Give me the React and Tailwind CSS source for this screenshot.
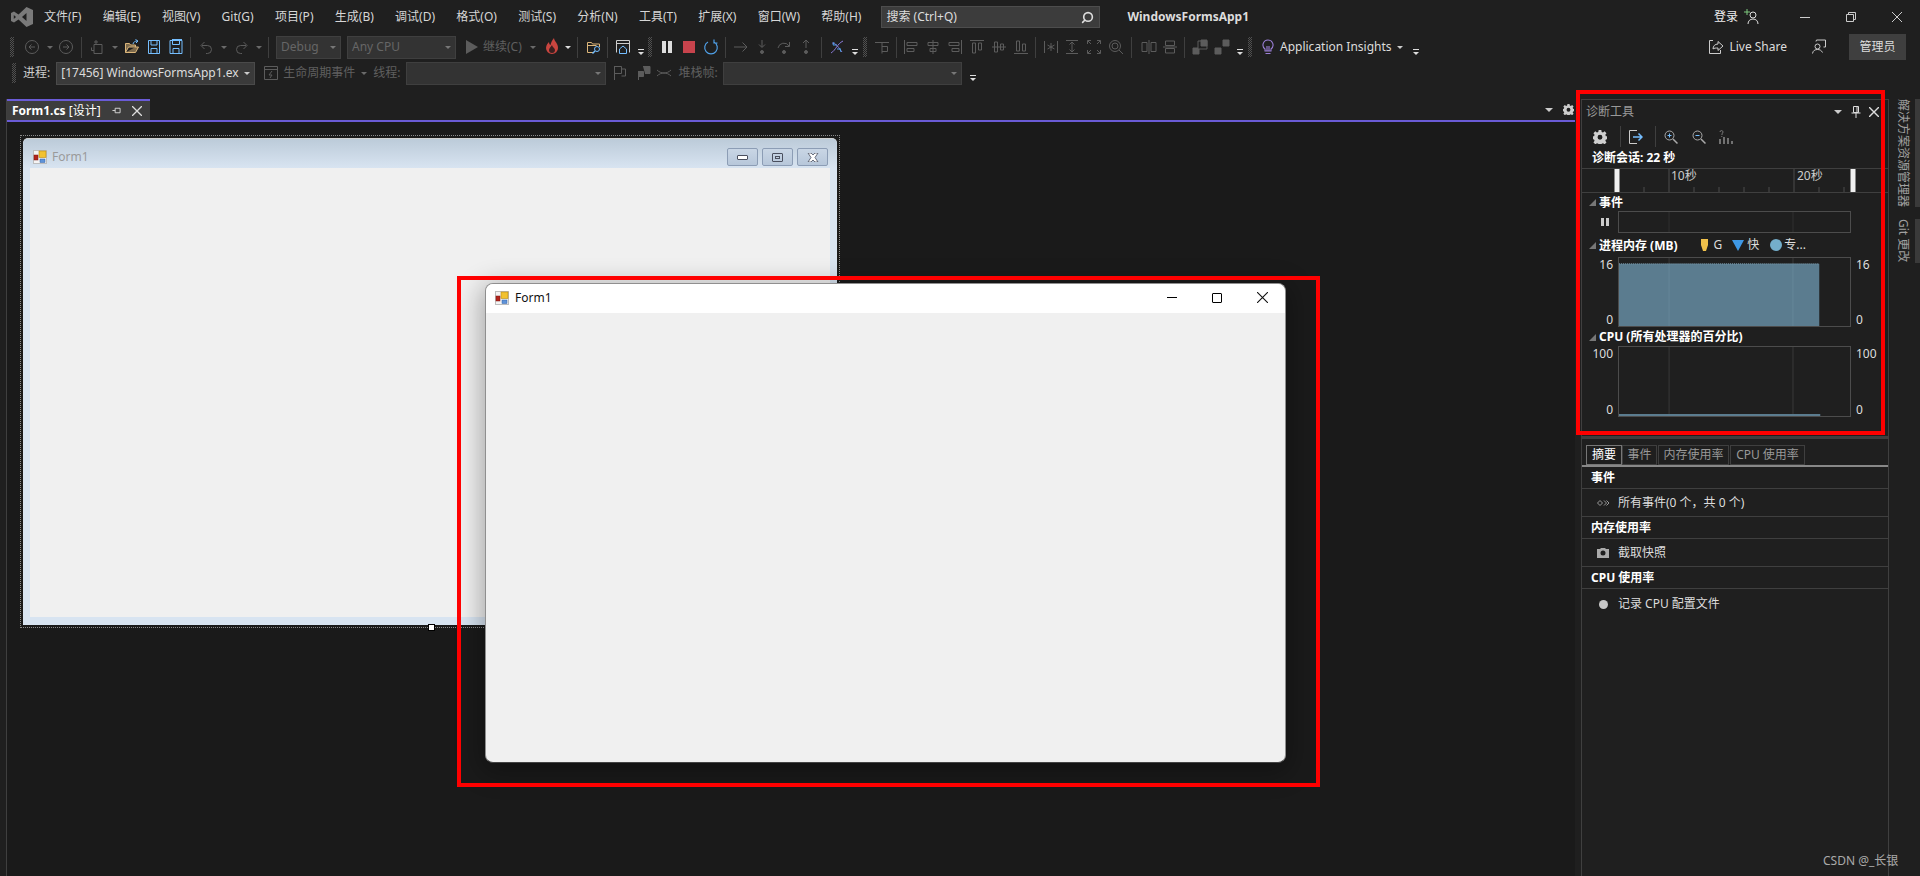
import { Search } from 'lucide-react'

const MENU = ['文件(F)', '编辑(E)', '视图(V)', 'Git(G)', '项目(P)', '生成(B)', '调试(D)', '格式(O)', '测试(S)', '分析(N)', '工具(T)', '扩展(X)', '窗口(W)', '帮助(H)']

function Ico({ className = '', children, fill = 'none' }) {
  return (
    <svg viewBox="0 0 16 16" fill={fill} stroke="currentColor" strokeWidth="1" className={`w-4 h-4 shrink-0 ${className}`}>
      {children}
    </svg>
  )
}

const Grip = ({ className = '' }) => (
  <div className={`w-[4px] h-[20px] shrink-0 bg-[conic-gradient(#505050_25%,transparent_0_50%,#505050_0_75%,transparent_0)] bg-[length:2px_2px] ${className}`} />
)
const Sep = ({ className = '' }) => <div className={`w-px h-[21px] shrink-0 bg-[#3f3f3f] ${className}`} />
const Caret = ({ className = '', color = 'border-t-[#6a6a6a]' }) => (
  <div className={`w-0 h-0 shrink-0 border-x-[3px] border-x-transparent border-t-[3px] ${color} ${className}`} />
)
const Overflow = ({ className = '' }) => (
  <div className={`w-[6px] shrink-0 flex flex-col items-center gap-[2px] mt-[9px] ${className}`}>
    <div className="w-[6px] h-px bg-[#ddd]" />
    <Caret color="border-t-[#ddd]" />
  </div>
)

function Combo({ className = '', text, textClass = 'text-[#666]', caret = 'border-t-[#777]', bg = 'bg-[#333] border-[#3f3f3f]' }) {
  return (
    <div className={`h-[23px] shrink-0 flex items-center border ${bg} ${className}`}>
      <span className={`flex-1 min-w-0 pl-[4px] whitespace-nowrap leading-[16px] ${textClass}`}>{text}</span>
      <Caret color={caret} className="mx-[4px]" />
    </div>
  )
}

function VsLogo() {
  return (
    <svg viewBox="0 0 22 20" className="w-[22px] h-[20px] shrink-0 ml-[11px]" fill="#7a7a7a" fillRule="evenodd">
      <path d="M15.5 0 22 3v14l-6.500 3-8-7.500L3 15.500 0 14V6l3-1.500 4.500 3zM15.500 6 11 10l4.500 4zM2.800 8v4L5 10z" />
    </svg>
  )
}

function FormIcon({ className = '' }) {
  return (
    <svg viewBox="0 0 14 14" className={`w-[14px] h-[14px] shrink-0 ${className}`}>
      <rect x="0.5" y="0.500" width="13" height="13" fill="#f4f4f4" stroke="#bdbdbd" />
      <rect x="6" y="1" width="7" height="6.500" fill="#f2c230" stroke="#b88a12" strokeWidth="0.6" />
      <rect x="1" y="5" width="4" height="5" fill="#b3241c" stroke="#7c1610" strokeWidth="0.5" />
      <rect x="7" y="9" width="5" height="3.500" fill="#5f93d8" stroke="#2f5fa8" strokeWidth="0.5" />
    </svg>
  )
}

function TitleBar() {
  return (
    <div className="h-[34px] flex items-center">
      <VsLogo />
      <div className="flex items-center gap-[21.3px] ml-[11px] text-[#d6d6d6]">
        {MENU.map((m) => (
          <span key={m} className="whitespace-nowrap">{m}</span>
        ))}
      </div>
      <div className="ml-[20px] w-[219px] h-[22px] flex items-center justify-between bg-[#3c3c3c] border border-[#4d4d4d] pl-[4px] pr-[5px] text-[#dcdcdc]">
        <span>搜索 (Ctrl+Q)</span>
        <Search size={13} strokeWidth={3} className="-scale-x-100 text-[#ddd]" />
      </div>
      <span className="ml-[27px] font-bold text-[#dcdcdc]">WindowsFormsApp1</span>
      <div className="ml-auto flex items-center text-[#eee]">
        <span>登录</span>
        <svg viewBox="0 0 16 18" className="w-[16px] h-[18px] ml-[6px]" fill="none" stroke="#ddd">
          <circle cx="9" cy="7" r="3" />
          <path d="M4 16c0-3 2-5 5-5s5 2 5 5" />
          <path d="M3 1v6M0 4h6" stroke="#7fc97f" />
        </svg>
        <div className="w-[10px] h-px bg-[#ccc] ml-[40px]" />
        <svg viewBox="0 0 10 10" className="w-[10px] h-[10px] ml-[36px]" fill="none" stroke="#ccc">
          <path d="M0.500 2.500h7v7h-7zM2.500 2.500v-2h7v7h-2" />
        </svg>
        <svg viewBox="0 0 10 10" className="w-[10px] h-[10px] ml-[36px] mr-[18px]" fill="none" stroke="#ccc">
          <path d="M0 0l10 10M10 0L0 10" />
        </svg>
      </div>
    </div>
  )
}

function Toolbar1() {
  const off = 'text-[#5c5c5c]'
  return (
    <div className="h-[26px] flex items-center">
      <Grip className="ml-[10px]" />
      <Ico className={`ml-[10px] ${off}`}><circle cx="8" cy="8" r="6.500" /><path d="M11 8H5M7.500 5.500 5 8l2.500 2.500" /></Ico>
      <Caret className="ml-[7px]" />
      <Ico className={`ml-[5px] ${off}`}><circle cx="8" cy="8" r="6.500" /><path d="M5 8h6M8.500 5.500 11 8l-2.500 2.500" /></Ico>
      <Sep className="ml-[7px]" />
      <Ico className={`ml-[7px] ${off}`}><path d="M5 5.500h8v9H5zM2.500 8.500v3h2.500M7 1v4M5 3h4" /></Ico>
      <Caret className="ml-[7px]" />
      <Ico className="ml-[6px] text-[#dcb67a]"><path d="M1.500 13.500v-9h4l1 1.500h5v2M1.500 13.500h10l3-5.500h-10z" fill="#dcb67a" fillOpacity="0.5" /><path d="M9 5c.5-2 2-3 4-3M11.500.5 14 2l-2 2" stroke="#75beff" /></Ico>
      <Ico className="ml-[6px] text-[#75beff]"><path d="M2.500 1.500h11v13h-11zM5 1.500v4.500h6V1.500M5 14.500v-5h6v5" /></Ico>
      <Ico className="ml-[6px] text-[#75beff]"><path d="M2 14.500v-13h12v13zM4.500 1.500v4h7v-4M5 14.500v-5h6v5" /><path d="M4 .5h10" /></Ico>
      <Sep className="ml-[6px]" />
      <Ico className={`ml-[7px] ${off}`}><path d="M4 6.500h5.500a4 4 0 0 1 0 8H8M6.500 3 3 6.500 6.500 10" /></Ico>
      <Caret className="ml-[7px]" />
      <Ico className={`ml-[7px] ${off}`}><path d="M12 6.500H6.500a4 4 0 0 0 0 8H8M9.500 3 13 6.500 9.500 10" /></Ico>
      <Caret className="ml-[6px]" />
      <Sep className="ml-[6px]" />
      <Combo className="ml-[7px] w-[65px]" text="Debug" />
      <Combo className="ml-[6px] w-[109px]" text="Any CPU" />
      <svg viewBox="0 0 12 14" className="w-[12px] h-[14px] ml-[10px] shrink-0" fill="#5c5c5c"><path d="M0 0l12 7-12 7z" /></svg>
      <span className="ml-[5px] w-[39px] whitespace-nowrap text-[#5f5f5f]">继续(C)</span>
      <Caret className="ml-[8px]" />
      <svg viewBox="0 0 16 18" className="w-[16px] h-[18px] ml-[8px] shrink-0">
        <path d="M10 0c0 3 4 5 4 10a6 6 0 0 1-12 0c0-3 2-5 3-6 0 2 1 3 1.500 3C7 5 8 2 10 0z" fill="#c9453f" />
        <path d="M8 7c0 2 3 3 3 5a3 3 0 0 1-6 0c0-2 2-3 3-5z" fill="#3a2020" />
      </svg>
      <Caret className="ml-[5px]" color="border-t-[#ddd]" />
      <Sep className="ml-[6px]" />
      <Ico className="ml-[8px] text-[#dcb67a]"><path d="M1.500 13.500v-10h4l1 1.500h7v3" /><path d="M1.500 13.500h6" /><path d="M1.500 6.500h9" /><circle cx="11" cy="10" r="2.500" stroke="#75beff" /><path d="M9 12l-2.500 2.500" stroke="#75beff" strokeWidth="1.500" /></Ico>
      <Sep className="ml-[5px]" />
      <Ico className="ml-[7px] text-[#ccc]"><path d="M1.500 13.500v-12h13v12M1.500 4.500h13" /><path d="M8 7l-3.500 3v4.500h7V10z" fill="#1f1f1f" stroke="#75beff" /></Ico>
      <Overflow className="ml-[7px]" />
      <Grip className="ml-[4px]" />
      <svg viewBox="0 0 16 16" className="w-4 h-4 ml-[7px] shrink-0" fill="#ddd"><path d="M3 2h4v12H3zM9 2h4v12H9z" /></svg>
      <svg viewBox="0 0 16 16" className="w-4 h-4 ml-[6px] shrink-0" fill="#c7434c"><path d="M2 2h12v12H2z" /></svg>
      <Ico className="ml-[6px] text-[#4f9fe6]"><path d="M5 3a6.300 6.300 0 1 0 6 0M11 .5V4h3.500" strokeWidth="1.200" /></Ico>
      <Sep className="ml-[6px]" />
      <Ico className={`ml-[7px] ${off}`}><path d="M1 8h13M9.500 3.500 14 8l-4.500 4.500" /></Ico>
      <Ico className={`ml-[5px] ${off}`}><path d="M8 1v7M5 5.500 8 8.500l3-3" /><circle cx="8" cy="13" r="1.500" fill="currentColor" /></Ico>
      <Ico className={`ml-[6px] ${off}`}><path d="M2 9a6 6 0 0 1 11-2M13.500 3v4.500H9" /><circle cx="8" cy="13" r="1.500" fill="currentColor" /></Ico>
      <Ico className={`ml-[6px] ${off}`}><path d="M8 9V1M5 4l3-3 3 3" /><circle cx="8" cy="13" r="1.500" fill="currentColor" /></Ico>
      <Sep className="ml-[7px]" />
      <Ico className="ml-[7px] text-[#8a7bd8]"><path d="M2 14C7 11 8 5 14 2M3 4c4 0 7 5 10 9" /><path d="M5 3l-1 3M8 6H4M12 10H8M12 13l-1-3" stroke="#4f9fe6" /></Ico>
      <Overflow className="ml-[7px]" />
      <Grip className="ml-[5px]" />
      <Ico className={`ml-[7px] ${off}`}><path d="M1 3.500h14M8 3.500v11M8 7.500h5.500v5H8" /></Ico>
      <Sep className="ml-[6px]" />
      <Ico className={`ml-[6px] ${off}`}><path d="M1.500 1v14M4 3.500h10v3H4zM4 9.500h7v3H4z" /></Ico>
      <Ico className={`ml-[6px] ${off}`}><path d="M8 1v14M3 3.500h10v3H3zM5 9.500h6v3H5z" /></Ico>
      <Ico className={`ml-[6px] ${off}`}><path d="M14.500 1v14M2 3.500h10v3H2zM5 9.500h7v3H5z" /></Ico>
      <Ico className={`ml-[6px] ${off}`}><path d="M1 1.500h14M3.500 4v10h3V4zM9.500 4v7h3V4z" /></Ico>
      <Ico className={`ml-[6px] ${off}`}><path d="M1 8h14M3.500 3v10h3V3zM9.500 5v6h3V5z" /></Ico>
      <Ico className={`ml-[6px] ${off}`}><path d="M1 14.500h14M3.500 2v10h3V2zM9.500 5v7h3V5z" /></Ico>
      <Sep className="ml-[6px]" />
      <Ico className={`ml-[7px] ${off}`}><path d="M1.500 2v12M14.500 2v12M8 4v8M4.500 6l7 4M11.500 6l-7 4" /></Ico>
      <Ico className={`ml-[5px] ${off}`}><path d="M2 1.500h12M2 14.500h12M8 3v10M5.500 5.500 8 3l2.500 2.500M5.500 10.500 8 13l2.500-2.500" /></Ico>
      <Ico className={`ml-[6px] ${off}`}><path d="M1.500 5V1.500H5M11 1.500h3.500V5M14.500 11v3.500H11M5 14.500H1.500V11M2 2l3 3M14 2l-3 3M14 14l-3-3M2 14l3-3" /></Ico>
      <Ico className={`ml-[6px] ${off}`}><circle cx="7" cy="7" r="5.500" /><circle cx="7" cy="7" r="3" /><path d="M11 11l4 4" /></Ico>
      <Sep className="ml-[7px]" />
      <Ico className={`ml-[9px] ${off}`}><path d="M1 3.500h5v9H1zM10 3.500h5v9h-5zM8 1v14" /></Ico>
      <Ico className={`ml-[5px] ${off}`}><path d="M3.500 2h9v4.500h-9zM3.500 9.500h9V14h-9zM1 8h14" /></Ico>
      <Sep className="ml-[6px]" />
      <Ico className={`ml-[7px] ${off}`}><path d="M1 9h6v6H1z" fill="currentColor" /><path d="M6 2h9v8H6z" fill="#1f1f1f" /><path d="M9 1h6v6H9z" fill="currentColor" /></Ico>
      <Ico className={`ml-[6px] ${off}`}><path d="M1 9h6v6H1zM9 1h6v6H9z" fill="currentColor" /></Ico>
      <Overflow className="ml-[7px]" />
      <Grip className="ml-[5px]" />
      <Ico className="ml-[8px] text-[#9b7fd6]"><path d="M8 1a5 5 0 0 0-3 9v2h6v-2a5 5 0 0 0-3-9zM5.500 14.500h5M7 12V7M9 12V7" strokeWidth="1.100" /></Ico>
      <span className="ml-[4px] whitespace-nowrap text-[#dcdcdc]">Application Insights</span>
      <Caret className="ml-[5px]" color="border-t-[#ccc]" />
      <Overflow className="ml-[10px]" />
      <div className="ml-auto flex items-center">
        <svg viewBox="0 0 16 16" className="w-4 h-4 shrink-0" fill="none" stroke="#ccc">
          <path d="M5 1.500H1.500v13h11V11" />
          <path d="M5 10c0-3 2-5 5-5V2.500L15 7l-5 4.500V9c-2 0-4 0-5 1z" />
        </svg>
        <span className="ml-[5px] whitespace-nowrap text-[#dcdcdc]">Live Share</span>
        <svg viewBox="0 0 16 16" className="w-4 h-4 ml-[24px] shrink-0" fill="none" stroke="#ccc">
          <circle cx="6.500" cy="7.500" r="2.500" />
          <path d="M1.500 14.500c.5-3 2.500-4 5-4s4 1 5 3M5 2.500 5.500 1h9v7h-2" />
        </svg>
        <div className="ml-[22px] mr-[14px] w-[57px] h-[26px] flex items-center justify-center bg-[#3f3f3f] text-[#ddd]">管理员</div>
      </div>
    </div>
  )
}

function Toolbar2() {
  const off = 'text-[#5c5c5c]'
  return (
    <div className="h-[26px] flex items-center">
      <Grip className="ml-[12px]" />
      <span className="ml-[7px] whitespace-nowrap text-[#ccc]">进程:</span>
      <Combo className="ml-[6px] w-[199px]" text="[17456] WindowsFormsApp1.ex" textClass="text-[#ddd]" caret="border-t-[#ccc]" bg="bg-[#3a3a3a] border-[#4a4a4a]" />
      <Ico className={`ml-[8px] ${off}`}><path d="M1.500 1.500h13v13h-13zM1.500 4.500h13M9 6 6 10h3l-2 3" /></Ico>
      <span className="ml-[4px] whitespace-nowrap text-[#5f5f5f]">生命周期事件</span>
      <Caret className="ml-[6px]" />
      <span className="ml-[6px] whitespace-nowrap text-[#5f5f5f]">线程:</span>
      <Combo className="ml-[6px] w-[200px]" text="" />
      <Ico className={`ml-[6px] ${off}`}><path d="M2.500 1v14M2.500 1.500h7v7h-7M9.500 4h4v7h-4" /></Ico>
      <Ico className={`ml-[8px] ${off}`}><path d="M2.500 6v9M2.500 6.500h5v5h-5M7 1.500h7v7H9" fill="currentColor" /></Ico>
      <Ico className={`ml-[4px] ${off}`}><path d="M1 5c4 4 10 4 14 0M1 11c4-4 10-4 14 0" /></Ico>
      <span className="ml-[6px] whitespace-nowrap text-[#5f5f5f]">堆栈帧:</span>
      <Combo className="ml-[5px] w-[239px]" text="" />
      <Overflow className="ml-[8px]" />
    </div>
  )
}

function DesignerForm() {
  const btn = 'w-[31px] h-[18px] rounded-[2px] border border-[#8c9db5] bg-gradient-to-b from-[#c9d6e5] to-[#b7c7da] flex items-center justify-center'
  return (
    <div className="relative w-[820px] h-[493px] border border-dotted border-[#8a8a8a] p-[2px]">
      <div className="h-full flex flex-col rounded-t-[5px] border-t border-[#d0d0d0] bg-[#d8e4f1] px-[7px] pb-[8px]">
        <div className="h-[29px] -mx-[7px] pl-[10px] pr-[9px] pt-[7px] shrink-0 flex items-center rounded-t-[5px] bg-gradient-to-b from-[#bccbd9] to-[#d8e4f1]">
          <FormIcon />
          <span className="ml-[5px] text-[#9a9a9a]">Form1</span>
          <div className="ml-auto flex items-center gap-[4px]">
            <div className={btn}><div className="w-[11px] h-[5px] rounded-[1px] border border-[#4a4f5e] bg-white" /></div>
            <div className={btn}><div className="w-[11px] h-[9px] rounded-[1px] border border-[#4a4f5e] flex items-center justify-center"><div className="w-[5px] h-[3px] border border-[#4a4f5e]" /></div></div>
            <div className={btn}>
              <svg viewBox="0 0 12 9" className="w-[12px] h-[9px]" fill="#fff" stroke="#4a4f5e" strokeWidth="0.8"><path d="M1 0h3l2 2 2-2h3L8 4.500 11 9H8L6 7 4 9H1l3-4.500z" /></svg>
            </div>
          </div>
        </div>
        <div className="flex-1 bg-[#f0f0f0]" />
      </div>
      <div className="absolute left-[407px] -bottom-[4px] w-[7px] h-[7px] bg-white border border-black" />
    </div>
  )
}

function RunningForm() {
  return (
    <div className="absolute left-[485px] top-[283px] w-[801px] h-[480px] flex flex-col overflow-hidden rounded-[8px] border border-[#8f8f8f] border-b-[#444] shadow-[0_6px_26px_4px_rgba(0,0,0,0.3)] bg-[#f0f0f0]">
      <div className="h-[29px] shrink-0 flex items-center bg-white pl-[9px] pb-[2px] text-[#111]">
        <FormIcon />
        <span className="ml-[6px]">Form1</span>
        <div className="w-[10px] h-px bg-black ml-auto" />
        <div className="w-[10px] h-[10px] rounded-[1px] border border-black ml-[35px]" />
        <svg viewBox="0 0 10 10" className="w-[11px] h-[11px] ml-[35px] mr-[17px]" fill="none" stroke="#111">
          <path d="M0 0l10 10M10 0L0 10" />
        </svg>
      </div>
      <div className="flex-1" />
    </div>
  )
}

function EditorArea() {
  return (
    <div className="w-[1569px] shrink-0 flex flex-col border-l border-[#3f3f3f]">
      <div className="h-[21px] shrink-0 flex items-center justify-between">
        <div className="w-[143px] h-full flex items-center border-t-2 border-[#6a5bd6] bg-[#3d3d3d] pl-[5px] font-bold text-white">
          <span className="whitespace-nowrap">Form1.cs <span className="font-normal">[设计]</span></span>
          <svg viewBox="0 0 10 10" className="w-[9px] h-[9px] ml-[11px]" fill="none" stroke="#ddd"><path d="M.5 5h3M3.500 2.500v5M3.500 2.500h5.500v5H3.500" /></svg>
          <svg viewBox="0 0 10 10" className="w-[10px] h-[10px] ml-[11px]" fill="none" stroke="#ddd" strokeWidth="1.300"><path d="M0 0l10 10M10 0L0 10" /></svg>
        </div>
        <div className="flex items-center pr-[1px]">
          <Caret color="border-t-[#ccc]" className="border-x-[4px] border-t-[4px] mr-[10px]" />
          <svg viewBox="0 0 16 16" className="w-[11px] h-[11px]" fill="#ccc"><path d="M6.500 0h3l.4 2.200 1.500.6L13.300 1.500l2.100 2.100-1.300 1.900.6 1.500 2.300.4v3l-2.300.4-.6 1.500 1.300 1.900-2.100 2.100-1.900-1.300-1.500.6-.4 2.300h-3l-.4-2.300-1.500-.6-1.900 1.300L.5 14.200l1.300-1.900-.6-1.500L-1 10.400v-3l2.200-.4.6-1.500L.5 3.600 2.600 1.500l1.900 1.300 1.500-.6zM8 5.500a2.800 2.800 0 1 0 0 5.600 2.800 2.800 0 0 0 0-5.600z" fillRule="evenodd" /></svg>
        </div>
      </div>
      <div className="h-[2px] shrink-0 bg-[#6a5bd6]" />
      <div className="flex-1 bg-[#1a1a1a] pl-[13px] pt-[13px]">
        <DesignerForm />
      </div>
    </div>
  )
}

function SectionHead({ children, className = '' }) {
  return (
    <div className={`flex items-center pl-[7px] pt-[1px] font-bold text-white whitespace-nowrap ${className}`}>
      <div className="w-0 h-0 border-l-[7px] border-l-transparent border-b-[7px] border-b-[#777] mr-[3px]" />
      {children}
    </div>
  )
}

function ChartGrid({ fill }) {
  return (
    <svg viewBox="0 0 233 70" preserveAspectRatio="none" className="w-[233px] shrink-0 h-full border border-[#4c4c4c]">
      <path d="M50.500 0v70M175.500 0v70" stroke="#3a3a3a" />
      {fill === 'mem' && <rect x="0" y="6" width="202" height="64" fill="#5b7c8f" />}
      {fill === 'mem' && <path d="M0 6h202" stroke="#7f9fb0" strokeDasharray="1 1" />}
      {fill === 'mem' && <path d="M50.500 6v64M175.500 6v64" stroke="#668799" />}
      {fill === 'cpu' && <path d="M0 69h203" stroke="#5b7c8f" strokeWidth="2" />}
    </svg>
  )
}

function ChartRow({ top, bottom, fill, className = '' }) {
  return (
    <div className={`flex ${className}`}>
      <div className="w-[36px] pr-[5px] pt-[1px] shrink-0 flex flex-col justify-between items-end text-[#ddd] leading-[14px]">
        <span>{top}</span>
        <span>{bottom}</span>
      </div>
      <ChartGrid fill={fill} />
      <div className="w-[36px] pl-[5px] pt-[1px] shrink-0 flex flex-col justify-between text-[#ddd] leading-[14px]">
        <span>{top}</span>
        <span>{bottom}</span>
      </div>
    </div>
  )
}

function Ruler() {
  return (
    <div className="relative h-[25px] shrink-0 border-y border-[#3f3f3f] text-[#ccc]">
      <svg viewBox="0 0 305 23" className="absolute inset-0 w-full h-full">
        <path d="M86.500 0v23M211.500 0v23" stroke="#4c4c4c" />
        <path d="M61.500 18v5M111.500 18v5M136.500 18v5M161.500 18v5M186.500 18v5M236.500 18v5M261.500 18v5" stroke="#4c4c4c" />
        <path d="M32 0h5v23h-5zM268 0h5v23h-5z" fill="#f0f0f0" />
      </svg>
      <span className="absolute left-[89px] top-0 leading-[14px]">10秒</span>
      <span className="absolute left-[215px] top-0 leading-[14px]">20秒</span>
    </div>
  )
}

function DiagTools() {
  return (
    <div className="h-[336px] shrink-0 flex flex-col">
      <div className="h-[23px] shrink-0 flex items-center pl-[4px] pr-[9px] text-[#999]">
        <span>诊断工具</span>
        <Caret color="border-t-[#ccc]" className="ml-auto border-x-[4px] border-t-[4px]" />
        <svg viewBox="0 0 10 12" className="w-[10px] h-[12px] ml-[9px]" fill="none" stroke="#ddd"><path d="M2.500.5h5v6h-5zM.5 7h9M5 7v5M6 1v5" /></svg>
        <svg viewBox="0 0 10 10" className="w-[10px] h-[10px] ml-[8px]" fill="none" stroke="#ddd" strokeWidth="1.400"><path d="M0 0l10 10M10 0L0 10" /></svg>
      </div>
      <div className="h-[27px] shrink-0 flex items-center pl-[11px]">
        <svg viewBox="0 0 16 16" className="w-[14px] h-[14px] shrink-0" fill="#cfcfcf"><path d="M6.500 0h3l.4 2.200 1.500.6L13.300 1.500l2.100 2.100-1.300 1.900.6 1.500 2.300.4v3l-2.300.4-.6 1.500 1.300 1.900-2.100 2.100-1.900-1.300-1.500.6-.4 2.300h-3l-.4-2.300-1.500-.6-1.900 1.300L.5 14.200l1.300-1.900-.6-1.500L-1 10.400v-3l2.200-.4.6-1.500L.5 3.600 2.600 1.500l1.900 1.300 1.500-.6zM8 5.500a2.800 2.800 0 1 0 0 5.600 2.800 2.800 0 0 0 0-5.600z" fillRule="evenodd" /></svg>
        <Sep className="ml-[13px] h-[16px]" />
        <svg viewBox="0 0 14 14" className="w-[14px] h-[14px] ml-[8px] shrink-0" fill="none"><path d="M8 .5H.5v13H8" stroke="#ccc" /><path d="M4 7h9M9.500 3.500 13 7l-3.500 3.500" stroke="#75beff" strokeWidth="1.500" /></svg>
        <Sep className="ml-[12px] h-[16px]" />
        <Ico className="ml-[7px] text-[#aaa]"><circle cx="6.500" cy="6.500" r="4.500" /><path d="M10 10l4.500 4.500" strokeWidth="1.500" /><path d="M4.500 6.500h4M6.500 4.500v4" stroke="#75beff" /></Ico>
        <Ico className="ml-[12px] text-[#aaa]"><circle cx="6.500" cy="6.500" r="4.500" /><path d="M10 10l4.500 4.500" strokeWidth="1.500" /><path d="M4.500 6.500h4" stroke="#75beff" /></Ico>
        <Ico className="ml-[11px] text-[#7a7a7a]"><path d="M2 3a1.500 1.500 0 1 1 2 1.500V6M3.800 7v1" /><path d="M2 15v-5M6 15V8M10 15v-6M14 15v-3" strokeWidth="1.800" /></Ico>
      </div>
      <div className="h-[16px] mb-[2px] shrink-0 flex items-center pl-[10px] font-bold text-white">诊断会话: 22 秒</div>
      <Ruler />
      <SectionHead className="h-[18px] shrink-0">事件</SectionHead>
      <div className="h-[22px] shrink-0 flex">
        <div className="w-[36px] shrink-0 flex items-center pl-[19px] gap-[2px]">
          <div className="w-[3px] h-[8px] bg-[#ccc]" />
          <div className="w-[3px] h-[8px] bg-[#ccc]" />
        </div>
        <ChartGrid />
      </div>
      <div className="h-[24px] shrink-0 flex items-center">
        <SectionHead>进程内存 (MB)</SectionHead>
        <svg viewBox="0 0 7 12" className="w-[7px] h-[12px] ml-[23px] shrink-0" fill="#f0c14b"><path d="M0 0h7v6l-2 6H2L0 6z" /></svg>
        <span className="ml-[6px] text-[#ddd]">G</span>
        <div className="ml-[10px] w-0 h-0 border-x-[6px] border-x-transparent border-t-[11px] border-t-[#3e98e6]" />
        <span className="ml-[3px] text-[#ddd]">快</span>
        <div className="ml-[11px] w-[12px] h-[12px] rounded-full bg-[#74aecb]" />
        <span className="ml-[2px] text-[#ddd]">专...</span>
      </div>
      <ChartRow className="h-[70px] shrink-0" top="16" bottom="0" fill="mem" />
      <SectionHead className="h-[19px] shrink-0">CPU (所有处理器的百分比)</SectionHead>
      <ChartRow className="h-[71px] shrink-0" top="100" bottom="0" fill="cpu" />
    </div>
  )
}

function SummaryHead({ children }) {
  return <div className="h-[22px] flex items-center pl-[9px] font-bold text-white border-b border-[#3f3f3f]">{children}</div>
}

function SummaryRow({ icon, children }) {
  return (
    <div className="h-[28px] flex items-center border-b border-[#3f3f3f] text-[#ddd]">
      <div className="w-[36px] shrink-0 pl-[15px]">{icon}</div>
      {children}
    </div>
  )
}

function DiagSummary() {
  const tab = 'h-[20px] flex items-center justify-center border border-[#3f3f3f] text-[#999]'
  return (
    <div className="flex-1 flex flex-col">
      <div className="h-[3px] shrink-0 bg-[#3f3f3f]" />
      <div className="h-[6px] shrink-0" />
      <div className="flex pl-[4px] shrink-0">
        <div className="w-[36px] h-[20px] flex items-center justify-center border border-[#777] text-white">摘要</div>
        <div className={`${tab} w-[35px]`}>事件</div>
        <div className={`${tab} ml-[1px] w-[71px]`}>内存使用率</div>
        <div className={`${tab} ml-[1px] w-[75px]`}>CPU 使用率</div>
      </div>
      <div className="h-[2px] shrink-0 bg-[#888]" />
      <SummaryHead>事件</SummaryHead>
      <SummaryRow icon={<svg viewBox="0 0 12 6" className="w-[12px] h-[6px]" fill="none" stroke="#999"><path d="M3 .5.5 3 3 5.500 5.500 3zM7 .5 9.500 3 7 5.500M9.500.5 12 3 9.500 5.500" /></svg>}>所有事件(0 个，共 0 个)</SummaryRow>
      <SummaryHead>内存使用率</SummaryHead>
      <SummaryRow icon={<svg viewBox="0 0 12 10" className="w-[12px] h-[10px]" fill="#aaa"><path d="M0 1h3l1-1h4l1 1h3v9H0zM6 2.500a2.500 2.500 0 1 0 0 5 2.500 2.500 0 0 0 0-5z" fillRule="evenodd" /></svg>}>截取快照</SummaryRow>
      <SummaryHead>CPU 使用率</SummaryHead>
      <div className="h-[30px] flex items-center text-[#ddd]">
        <div className="w-[36px] shrink-0 pl-[17px]"><div className="w-[9px] h-[9px] rounded-full bg-[#c8c8c8]" /></div>
        记录 CPU 配置文件
      </div>
    </div>
  )
}

function SideStrip() {
  const label = 'mr-[5px] whitespace-nowrap leading-[14px] [writing-mode:vertical-rl] [text-orientation:sideways]'
  return (
    <div className="w-[32px] shrink-0 flex flex-col gap-[12px] text-[#a0a0a0]">
      <div className="h-[108px] flex justify-end border-r-[6px] border-[#3a3a3a]">
        <span className={label}>解决方案资源管理器</span>
      </div>
      <div className="h-[44px] flex justify-end border-r-[6px] border-[#3a3a3a]">
        <span className={label}>Git 更改</span>
      </div>
    </div>
  )
}

export default function App() {
  return (
    <div className="relative w-[1920px] h-[876px] overflow-hidden flex flex-col bg-[#1f1f1f] text-[12px] leading-none font-['Noto_Sans','Noto_Sans_CJK_SC',sans-serif]">
      <TitleBar />
      <Toolbar1 />
      <Toolbar2 />
      <div className="mt-[13px] flex-1 min-h-0 flex pl-[6px]">
        <EditorArea />
        <div className="w-[6px] shrink-0" />
        <div className="w-[308px] shrink-0 flex flex-col border-x border-t border-[#3f3f3f]">
          <DiagTools />
          <DiagSummary />
        </div>
        <SideStrip />
      </div>
      <RunningForm />
      <div className="absolute left-[457px] top-[276px] w-[863px] h-[511px] border-4 border-[#ff0000]" />
      <div className="absolute left-[1576px] top-[90px] w-[309px] h-[345px] border-4 border-[#ff0000]" />
      <span className="absolute left-[1823px] top-[854px] text-[#aaa] leading-[14px]">CSDN @_长银</span>
    </div>
  )
}
